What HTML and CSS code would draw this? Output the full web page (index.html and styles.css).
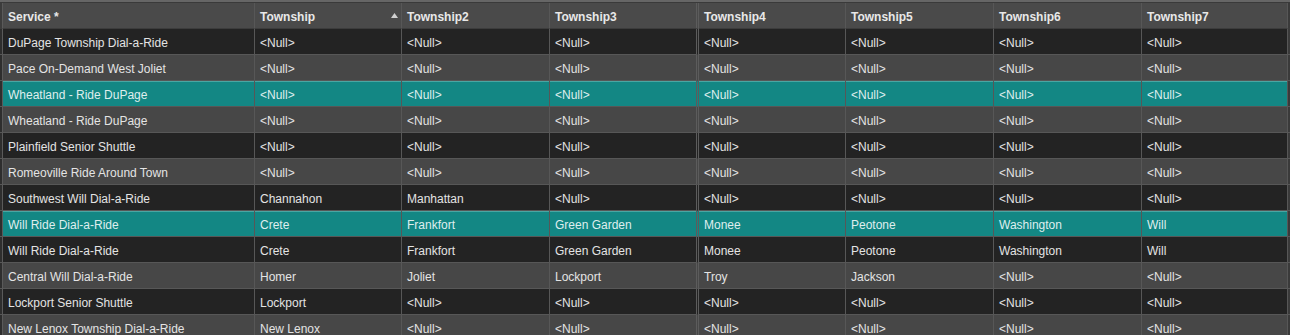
FILE: index.html
```html
<!DOCTYPE html>
<html>
<head>
<meta charset="utf-8">
<link rel="stylesheet" href="styles.css">
</head>
<body>
<div class="grid">
  <div class="row head">
    <div class="cell edge"></div>
    <div class="cell">Service *</div>
    <div class="cell sorted"><span>Township</span><svg class="arrow" width="7" height="5" viewBox="0 0 7 5"><path d="M0 5 L3.5 0 L7 5 Z" fill="#d0d0d0"/></svg></div>
    <div class="cell">Township2</div>
    <div class="cell split">Township3</div>
    <div class="cell">Township4</div>
    <div class="cell">Township5</div>
    <div class="cell">Township6</div>
    <div class="cell">Township7</div>
    <div class="cell tail"></div>
  </div>

  <div class="row dark">
    <div class="cell edge"></div>
    <div class="cell">DuPage Township Dial-a-Ride</div>
    <div class="cell">&lt;Null&gt;</div><div class="cell">&lt;Null&gt;</div><div class="cell split">&lt;Null&gt;</div><div class="cell">&lt;Null&gt;</div><div class="cell">&lt;Null&gt;</div><div class="cell">&lt;Null&gt;</div><div class="cell">&lt;Null&gt;</div>
    <div class="cell tail"></div>
  </div>
  <div class="row gray">
    <div class="cell edge"></div>
    <div class="cell">Pace On-Demand West Joliet</div>
    <div class="cell">&lt;Null&gt;</div><div class="cell">&lt;Null&gt;</div><div class="cell split">&lt;Null&gt;</div><div class="cell">&lt;Null&gt;</div><div class="cell">&lt;Null&gt;</div><div class="cell">&lt;Null&gt;</div><div class="cell">&lt;Null&gt;</div>
    <div class="cell tail"></div>
  </div>
  <div class="row sel">
    <div class="cell edge"></div>
    <div class="cell">Wheatland - Ride DuPage</div>
    <div class="cell">&lt;Null&gt;</div><div class="cell">&lt;Null&gt;</div><div class="cell split">&lt;Null&gt;</div><div class="cell">&lt;Null&gt;</div><div class="cell">&lt;Null&gt;</div><div class="cell">&lt;Null&gt;</div><div class="cell">&lt;Null&gt;</div>
    <div class="cell tail"></div>
  </div>
  <div class="row gray">
    <div class="cell edge"></div>
    <div class="cell">Wheatland - Ride DuPage</div>
    <div class="cell">&lt;Null&gt;</div><div class="cell">&lt;Null&gt;</div><div class="cell split">&lt;Null&gt;</div><div class="cell">&lt;Null&gt;</div><div class="cell">&lt;Null&gt;</div><div class="cell">&lt;Null&gt;</div><div class="cell">&lt;Null&gt;</div>
    <div class="cell tail"></div>
  </div>
  <div class="row dark">
    <div class="cell edge"></div>
    <div class="cell">Plainfield Senior Shuttle</div>
    <div class="cell">&lt;Null&gt;</div><div class="cell">&lt;Null&gt;</div><div class="cell split">&lt;Null&gt;</div><div class="cell">&lt;Null&gt;</div><div class="cell">&lt;Null&gt;</div><div class="cell">&lt;Null&gt;</div><div class="cell">&lt;Null&gt;</div>
    <div class="cell tail"></div>
  </div>
  <div class="row gray">
    <div class="cell edge"></div>
    <div class="cell">Romeoville Ride Around Town</div>
    <div class="cell">&lt;Null&gt;</div><div class="cell">&lt;Null&gt;</div><div class="cell split">&lt;Null&gt;</div><div class="cell">&lt;Null&gt;</div><div class="cell">&lt;Null&gt;</div><div class="cell">&lt;Null&gt;</div><div class="cell">&lt;Null&gt;</div>
    <div class="cell tail"></div>
  </div>
  <div class="row dark">
    <div class="cell edge"></div>
    <div class="cell">Southwest Will Dial-a-Ride</div>
    <div class="cell">Channahon</div><div class="cell">Manhattan</div><div class="cell split">&lt;Null&gt;</div><div class="cell">&lt;Null&gt;</div><div class="cell">&lt;Null&gt;</div><div class="cell">&lt;Null&gt;</div><div class="cell">&lt;Null&gt;</div>
    <div class="cell tail"></div>
  </div>
  <div class="row sel">
    <div class="cell edge"></div>
    <div class="cell">Will Ride Dial-a-Ride</div>
    <div class="cell">Crete</div><div class="cell">Frankfort</div><div class="cell split">Green Garden</div><div class="cell">Monee</div><div class="cell">Peotone</div><div class="cell">Washington</div><div class="cell">Will</div>
    <div class="cell tail"></div>
  </div>
  <div class="row dark">
    <div class="cell edge"></div>
    <div class="cell">Will Ride Dial-a-Ride</div>
    <div class="cell">Crete</div><div class="cell">Frankfort</div><div class="cell split">Green Garden</div><div class="cell">Monee</div><div class="cell">Peotone</div><div class="cell">Washington</div><div class="cell">Will</div>
    <div class="cell tail"></div>
  </div>
  <div class="row gray">
    <div class="cell edge"></div>
    <div class="cell">Central Will Dial-a-Ride</div>
    <div class="cell">Homer</div><div class="cell">Joliet</div><div class="cell split">Lockport</div><div class="cell">Troy</div><div class="cell">Jackson</div><div class="cell">&lt;Null&gt;</div><div class="cell">&lt;Null&gt;</div>
    <div class="cell tail"></div>
  </div>
  <div class="row dark">
    <div class="cell edge"></div>
    <div class="cell">Lockport Senior Shuttle</div>
    <div class="cell">Lockport</div><div class="cell">&lt;Null&gt;</div><div class="cell split">&lt;Null&gt;</div><div class="cell">&lt;Null&gt;</div><div class="cell">&lt;Null&gt;</div><div class="cell">&lt;Null&gt;</div><div class="cell">&lt;Null&gt;</div>
    <div class="cell tail"></div>
  </div>
  <div class="row gray">
    <div class="cell edge"></div>
    <div class="cell">New Lenox Township Dial-a-Ride</div>
    <div class="cell">New Lenox</div><div class="cell">&lt;Null&gt;</div><div class="cell split">&lt;Null&gt;</div><div class="cell">&lt;Null&gt;</div><div class="cell">&lt;Null&gt;</div><div class="cell">&lt;Null&gt;</div><div class="cell">&lt;Null&gt;</div>
    <div class="cell tail"></div>
  </div>
</div>
</body>
</html>
```

FILE: styles.css
```css
html, body {
  margin: 0;
  padding: 0;
  background: #3a3a3a;
  overflow: hidden;
}

.grid {
  width: 1290px;
  border-top: 2px solid #666666;
  padding-top: 1px;
  background: #3a3a3a;
  font-family: "Liberation Sans", Arial, sans-serif;
  font-size: 12px;
  color: #e4e4e4;
}

.row {
  display: grid;
  grid-template-columns: 3px 252px 147px 148px 149px 147px 148px 148px 146px 2px;
  height: 26px;
}

.cell {
  box-sizing: border-box;
  height: 26px;
  border-right: 1px solid #575757;
  border-bottom: 1px solid #575757;
  padding: 2px 0 0 5px;
  display: flex;
  align-items: center;
  white-space: nowrap;
  overflow: hidden;
}

.cell.split {
  border-right: 3px double #5c5c5c;
}

.cell.edge {
  padding: 0;
  background: #2e2e2e;
  border-right: 1px solid #5a5a5a;
}

.cell.tail {
  padding: 0;
  border-right: none;
  background: #3a3a3a;
}

.head {
  background: #4a4a4a;
  font-weight: bold;
  color: #e8e8e8;
}

.head .cell {
  border-bottom: 1px solid #3c3c3c;
}

.head .cell.edge {
  background: #3c3c3c;
}

.sorted {
  justify-content: space-between;
  padding-right: 3px;
}

.arrow {
  display: block;
  margin-top: -2px;
}

.dark {
  background: #232323;
}

.gray {
  background: #474747;
}

.sel {
  background: #138784;
  color: #dfeeee;
}

.sel .cell {
  box-shadow: inset 0 1px 0 #4aa6a3;
}

.sel .cell.edge,
.sel .cell.tail {
  box-shadow: none;
}
```
